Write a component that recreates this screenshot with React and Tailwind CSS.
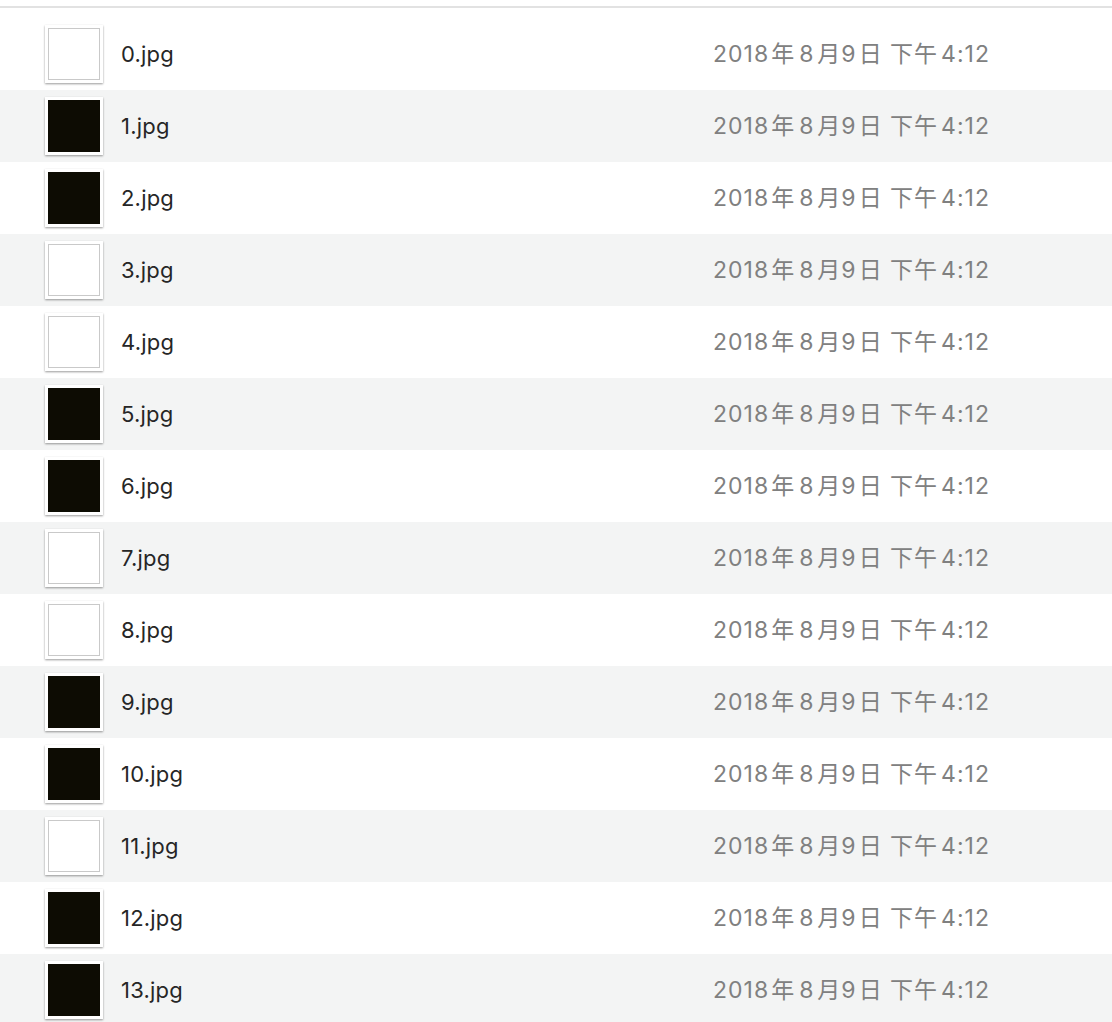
import React from "react";

const darkFiles = [1, 2, 5, 6, 9, 10, 12, 13];

const files = Array.from({ length: 14 }, (_, i) => ({
  name: `${i}.jpg`,
  dark: darkFiles.includes(i),
}));

function Thumb({ dark }) {
  return (
    <div className="w-[58px] h-[58px] bg-white p-[3px] shadow-[0_1px_2px_rgba(0,0,0,0.4)] shrink-0">
      {dark ? (
        <div className="w-full h-full bg-[#0d0c03]" />
      ) : (
        <div className="w-full h-full bg-white border border-[#c9c9c9]" />
      )}
    </div>
  );
}

function DateText() {
  return (
    <span className="text-[23px] tracking-[1px] text-[#808080] whitespace-nowrap">
      <span>2018</span>
      <span className="ml-[2px] mr-[4px]">年</span>
      <span>8</span>
      <span className="ml-[3px]">月</span>
      <span>9</span>
      <span className="ml-[2px]">日</span>{" "}
      <span>下</span>
      <span className="mr-[3px]">午</span>
      <span>4:12</span>
    </span>
  );
}

export default function App() {
  return (
    <div className="w-[1112px] h-[1022px] overflow-hidden bg-white font-['Inter','Noto_Sans_CJK_SC',sans-serif]">
      <div className="h-[6px]" />
      <div className="h-[2px] bg-[#e2e2e2]" />
      <div className="h-[10px]" />
      {files.map((f, i) => (
        <div
          key={f.name}
          className={`flex items-center h-[72px] ${i % 2 === 1 ? "bg-[#f3f4f4]" : "bg-white"}`}
        >
          <div className="ml-[45px]">
            <Thumb dark={f.dark} />
          </div>
          <span className="ml-[18px] w-[592px] text-[22px] text-[#262626] tracking-[0.2px]">
            {f.name}
          </span>
          <DateText />
        </div>
      ))}
    </div>
  );
}
